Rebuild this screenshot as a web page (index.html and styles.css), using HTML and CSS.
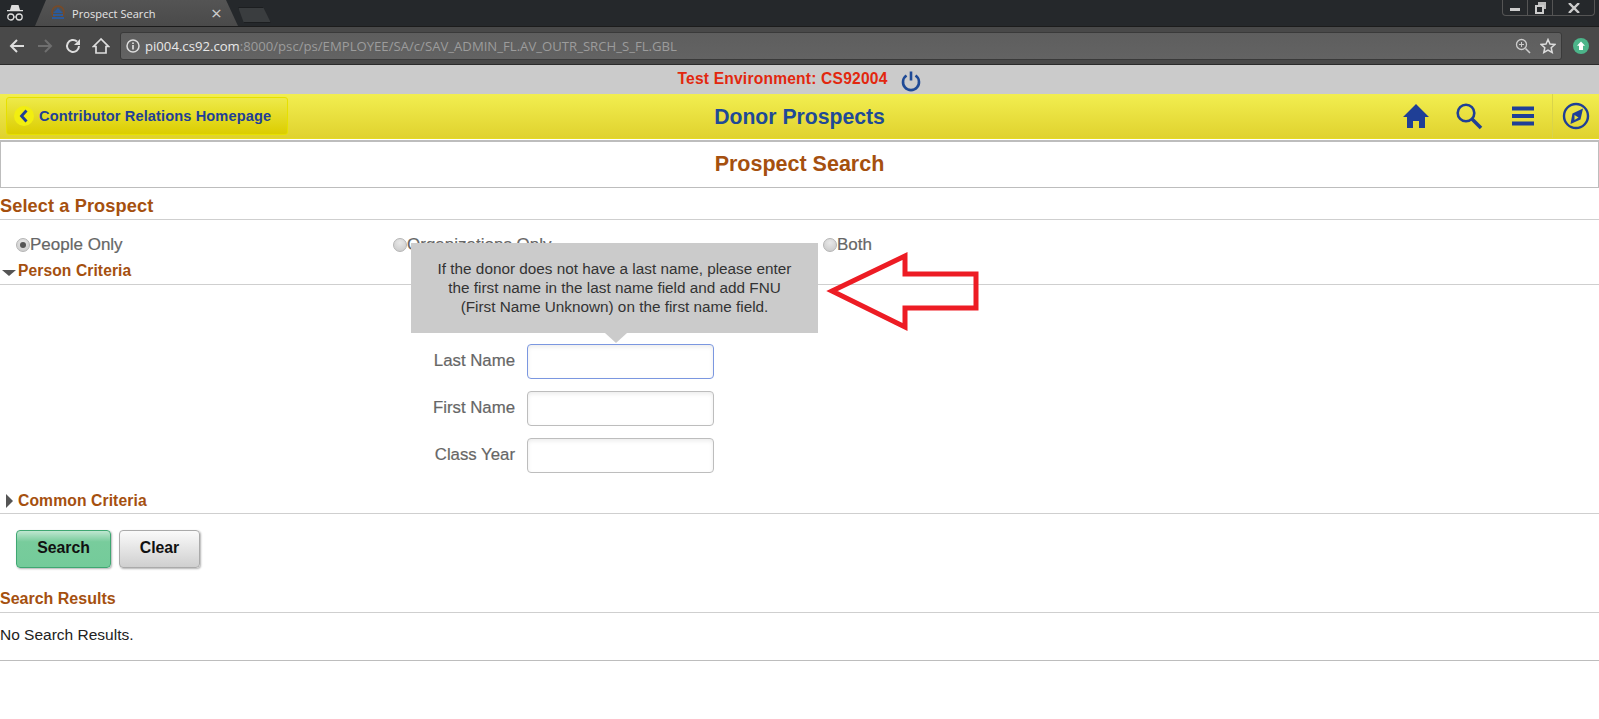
FILE: index.html
```html
<!DOCTYPE html>
<html lang="en">
<head>
<meta charset="utf-8">
<title>Prospect Search</title>
<link rel="stylesheet" href="styles.css">
</head>
<body>
<div class="tabstrip">
  <svg class="incognito" width="18" height="18" viewBox="0 0 18 18"><path d="M5.500 1h7l1.500 5h3v1.200H1V6h3z" fill="#ddd"/><circle cx="4.800" cy="13" r="3" fill="none" stroke="#ddd" stroke-width="1.300"/><circle cx="13.200" cy="13" r="3" fill="none" stroke="#ddd" stroke-width="1.300"/><path d="M7.800 13h2.400" stroke="#ddd"/></svg>
  <div class="tab">
    <svg class="favicon" width="16" height="16" viewBox="0 0 16 16"><circle cx="8" cy="7" r="6" fill="none" stroke="#7a4a25" stroke-width="1.500"/><path d="M8 3l5 5H3zM3 9h10v2H3zM2 12h12v2H2z" fill="#2c5a9a"/></svg>
    <span class="tabtitle">Prospect Search</span>
    <span class="tabclose">×</span>
  </div>
  <div class="newtab"></div>
  <div class="winctl">
    <span class="winbtn"><svg width="12" height="12" viewBox="0 0 12 12"><rect x="1" y="6" width="10" height="3" fill="#ccc"/></svg></span>
    <span class="winbtn"><svg width="13" height="13" viewBox="0 0 13 13"><path d="M4 1h8v7h-2V4H4z" fill="#bbb"/><rect x="2" y="5" width="7" height="7" fill="none" stroke="#ccc" stroke-width="2"/></svg></span>
    <span class="winbtn wide"><svg width="12" height="10" viewBox="0 0 12 10"><path d="M1 0l5 5 5-5M1 10l5-5 5 5" fill="none" stroke="#ccc" stroke-width="2.400"/></svg></span>
  </div>
</div>
<div class="toolbar">
  <svg class="tool first" width="18" height="18" viewBox="0 0 18 18"><path d="M16 9H3M9 3L3 9l6 6" fill="none" stroke="#ddd" stroke-width="2"/></svg>
  <svg class="tool" width="18" height="18" viewBox="0 0 18 18"><path d="M2 9h13M9 3l6 6-6 6" fill="none" stroke="#6f6f6f" stroke-width="2"/></svg>
  <svg class="tool" width="18" height="18" viewBox="0 0 18 18"><path d="M15 9a6 6 0 1 1-2-4.500" fill="none" stroke="#ddd" stroke-width="2"/><path d="M16 2v6h-6z" fill="#ddd"/></svg>
  <svg class="tool" width="18" height="18" viewBox="0 0 18 18"><path d="M9 2L1.500 9.500H4V16h10V9.500h2.500z" fill="none" stroke="#ddd" stroke-width="1.700"/></svg>
  <div class="omnibox">
    <svg class="info" width="14" height="14" viewBox="0 0 14 14"><circle cx="7" cy="7" r="6" fill="none" stroke="#ddd" stroke-width="1.500"/><path d="M7 6v4.500M7 3.500v1.500" stroke="#ddd" stroke-width="1.700"/></svg>
    <span class="url"><span class="host">pi004.cs92.com</span>:8000/psc/ps/EMPLOYEE/SA/c/SAV_ADMIN_FL.AV_OUTR_SRCH_S_FL.GBL</span>
    <svg class="zoomicon" width="16" height="16" viewBox="0 0 16 16"><circle cx="6.500" cy="6.500" r="5" fill="none" stroke="#ccc" stroke-width="1.300"/><path d="M4 6.500h5M6.500 4v5" stroke="#ccc"/><path d="M10.500 10.500L15 15" stroke="#ccc" stroke-width="1.600"/></svg>
    <svg class="star" width="16" height="16" viewBox="0 0 16 16"><path d="M8 1.500l2 4.500 4.800.5-3.600 3.200 1 4.800L8 12l-4.200 2.500 1-4.800L1.200 6.500 6 6z" fill="none" stroke="#ddd" stroke-width="1.500"/></svg>
  </div>
  <svg class="update" width="16" height="16" viewBox="0 0 16 16"><circle cx="8" cy="8" r="8" fill="#4cb58a"/><path d="M8 3.500l4 4.200H10V12H6V7.700H4z" fill="#fff"/></svg>
</div>
<div class="envbar">
  <span class="envtext">Test Environment: CS92004</span>
  <svg class="power" width="22" height="22" viewBox="0 0 22 22"><path d="M6.500 5.500a8 8 0 1 0 9 0" fill="none" stroke="#1f4a96" stroke-width="2.600"/><path d="M11 1.500v9" stroke="#1f4a96" stroke-width="2.600"/></svg>
</div>
<header class="banner">
  <div class="bannerside">
    <a class="backbtn"><span class="backcirc"><svg width="10" height="14" viewBox="0 0 10 14"><path d="M7.500 1.500L2.500 7l5 5.500" fill="none" stroke="#1f3f96" stroke-width="2.800"/></svg></span>Contributor Relations Homepage</a>
  </div>
  <h1 class="apptitle">Donor Prospects</h1>
  <div class="bannerside navicons">
    <svg width="28" height="26" viewBox="0 0 28 26"><path d="M14 1L1 14h4v11h6v-7h6v7h6V14h4z" fill="#1f3f96"/></svg>
    <svg width="28" height="28" viewBox="0 0 28 28"><circle cx="11" cy="11" r="8.300" fill="none" stroke="#1f3f96" stroke-width="2.600"/><path d="M17 17l9 9" stroke="#1f3f96" stroke-width="3.600"/></svg>
    <svg class="menuicon" width="24" height="22" viewBox="0 0 24 22"><path d="M1 1.500h22v4H1zM1 9h22v4H1zM1 16.500h22v4H1z" fill="#1f3f96"/></svg>
    <span class="navsep"><svg width="28" height="28" viewBox="0 0 28 28"><circle cx="14" cy="14" r="12" fill="none" stroke="#1f3f96" stroke-width="2.400"/><path d="M21 6.500l-2.500 11-10 4.500 2-10.500z" fill="#1f3f96"/><path d="M12.500 13v5l4-2.500z" fill="#e8e23c"/></svg></span>
  </div>
</header>
<main>
  <div class="pagetitle">Prospect Search</div>
  <h2 class="section big">Select a Prospect</h2>
  <div class="radios">
    <label class="radio col1"><span class="dot on"></span>People Only</label>
    <label class="radio col2"><span class="dot"></span>Organizations Only</label>
    <label class="radio col3"><span class="dot"></span>Both</label>
  </div>
  <h3 class="section person"><span class="tridown"></span>Person Criteria</h3>
  <div class="fields">
    <div class="field"><label>Last Name</label><input class="focus" type="text"></div>
    <div class="field"><label>First Name</label><input type="text"></div>
    <div class="field"><label>Class Year</label><input type="text"></div>
  </div>
  <h3 class="section common"><span class="triright"></span>Common Criteria</h3>
  <div class="buttons">
    <button class="btn search">Search</button>
    <button class="btn clear">Clear</button>
  </div>
  <h3 class="section results">Search Results</h3>
  <p class="noresults">No Search Results.</p>
</main>
<div class="tooltip">If the donor does not have a last name, please enter the first name in the last name field and add FNU (First Name Unknown) on the first name field.</div>
<svg class="redarrow" width="155" height="84" viewBox="0 0 155 84"><path d="M6 41L79 6V24H150V58H79V77Z" fill="none" stroke="#ed1c24" stroke-width="5"/></svg>
</body>
</html>
```
FILE: styles.css
```css
* { box-sizing: border-box; }
html, body { margin: 0; padding: 0; }
body { width: 1599px; height: 719px; overflow: hidden; background: #fff; font-family: "Liberation Sans", Arial, sans-serif; position: relative; }

.tabstrip { height: 27px; background: #25282b; display: flex; align-items: flex-end; border-bottom: 1px solid #1c1c1c; position: relative; }
.incognito { margin: 0 0 4px 6px; }
.tab { width: 203px; height: 26px; margin-left: 11px; background: linear-gradient(#545454, #4a4a4a); clip-path: polygon(11px 0, 191px 0, 203px 100%, 0 100%); display: flex; align-items: center; padding-left: 15px; color: #e6e6e6; font: 11px "Open Sans", sans-serif; letter-spacing: .05px; }
.tabtitle { margin-left: 6px; width: 139px; }
.tabclose { font-size: 19px; color: #ccc; line-height: 1; }
.newtab { width: 33px; height: 16px; margin: 0 0 3px 0; background: #3a3d3f; border: 1px solid #1c1e20; clip-path: polygon(0 0, 76% 0, 100% 100%, 18% 100%); }
.winctl { margin-left: auto; margin-right: 4px; align-self: flex-start; height: 16px; display: flex; border: 1px solid #555; border-top: 0; border-radius: 0 0 4px 4px; }
.winbtn { width: 25px; display: flex; align-items: center; justify-content: center; border-right: 1px solid #555; }
.winbtn.wide { width: 41px; border-right: 0; }

.toolbar { height: 38px; background: #494949; border-bottom: 1px solid #2b2b2b; display: flex; align-items: center; }
.tool { margin-right: 10px; }
.tool.first { margin-left: 8px; }
.omnibox { width: 1442px; height: 28px; background: linear-gradient(#5e5e5e, #636363); border: 1px solid #3a3a3a; border-radius: 3px; display: flex; align-items: center; padding: 0 5px; }
.info { flex: none; }
.url { margin-left: 5px; flex: 1; font: 13.150px "Open Sans", sans-serif; color: #9c9c9c; white-space: nowrap; }
.host { color: #e8e8e8; }
.zoomicon { margin-right: 9px; }
.update { margin-left: 11px; }

.envbar { height: 29px; background: #cbcbcb; display: flex; justify-content: center; align-items: center; gap: 12px; }
.envtext { padding-bottom: 2px; color: #e2270e; font-size: 15.600px; font-weight: 700; letter-spacing: .2px; }
.power { margin-top: 2px; }

.banner { height: 45px; background: linear-gradient(#f2ee50, #e0d22e); display: flex; align-items: center; border-bottom: 1px solid #e6da20; }
.bannerside { flex: 1 1 0; min-width: 0; }
.backbtn { margin-left: 6px; width: 282px; height: 38px; display: flex; align-items: center; background: linear-gradient(#eeea4a, #dccd00); border: 1px solid #e6e000; border-radius: 3px; color: #1f3f96; font-size: 14.600px; font-weight: 700; letter-spacing: .12px; }
.backcirc { width: 20px; height: 20px; margin: 0 5px 0 7px; border-radius: 50%; background: #f2ee10; display: flex; align-items: center; justify-content: center; }
.apptitle { margin: 0; padding-top: 2px; flex: none; text-align: center; color: #1f4a96; font-size: 21.200px; font-weight: 700; }
.navicons { display: flex; align-items: center; justify-content: flex-end; gap: 25px; }
.menuicon { margin-left: 3px; }
.navsep { height: 44px; width: 47px; border-left: 1px solid #d9d44a; display: flex; align-items: center; justify-content: center; margin-left: -8px; }

main { display: block; }
.pagetitle { height: 48px; margin-top: 1px; border: 1px solid #bdbdbd; border-top-width: 2px; display: flex; align-items: center; justify-content: center; color: #a5500f; font-size: 21.500px; font-weight: 700; }
.section { margin: 0; color: #a5500f; font-weight: 700; border-bottom: 1px solid #cfcfcf; }
.section.big { height: 32px; padding-top: 3px; font-size: 18.200px; line-height: 30px; letter-spacing: .1px; }
.radios { height: 37px; display: flex; align-items: center; padding-top: 12px; }
.radio { display: flex; align-items: center; color: #666; font-size: 17px; font-weight: 400; -webkit-text-stroke: .2px #666; }
.col1 { margin-left: 16px; width: 377px; }
.col2 { width: 430px; }
.dot { width: 14px; height: 14px; border-radius: 50%; border: 1px solid #b5b5b5; background: radial-gradient(circle at 50% 30%, #e8e8e8, #c8c8c8); display: inline-block; position: relative; }
.dot.on::after { content: ""; position: absolute; left: 3px; top: 3px; width: 6px; height: 6px; border-radius: 50%; background: #555; }
.section.person { height: 28px; font-size: 15.600px; display: flex; align-items: center; letter-spacing: .1px; }
.tridown { width: 0; height: 0; margin: 4px 2px 0 2px; border-style: solid; border-width: 6px 7px 0; border-color: #555 transparent transparent; }
.fields { height: 216px; padding-top: 59px; display: flex; flex-direction: column; gap: 12px; }
.field { display: flex; align-items: center; height: 35px; }
.field label { width: 515px; padding-bottom: 1px; text-align: right; color: #666; font-size: 16.800px; -webkit-text-stroke: .2px #666; }
.field input { margin-left: 12px; width: 187px; height: 35px; border: 1px solid #bdbdbd; border-radius: 4px; box-shadow: inset 0 2px 4px rgba(0,0,0,.08); background: #fff; outline: none; }
.field input.focus { border-color: #7b97e0; }
.section.common { height: 28px; margin-top: -15px; padding-top: 2px; font-size: 15.700px; display: flex; align-items: center; letter-spacing: .1px; }
.triright { width: 0; height: 0; margin: 0 5px 0 6px; border-style: solid; border-width: 7px 0 7px 7px; border-color: transparent transparent transparent #555; }
.buttons { height: 70px; padding: 16px 0 0 16px; display: flex; gap: 8px; align-items: flex-start; }
.btn { height: 38px; padding: 0 0 2px; border-radius: 4px; font: 700 15.800px "Liberation Sans", sans-serif; color: #111; box-shadow: 1px 1px 2px rgba(0,0,0,.3); }
.search { width: 95px; border: 1px solid #3fa772; background: linear-gradient(#bfe6d0, #78cc9c 30%, #74cb9a); }
.clear { width: 81px; border: 1px solid #aaa; background: linear-gradient(#fafafa, #cfcfcf); }
.section.results { height: 29px; font-size: 16px; line-height: 29px; }
.noresults { margin: 0; height: 48px; padding-top: 13px; border-bottom: 1px solid #bdbdbd; font-size: 15.500px; color: #222; }

.tooltip { position: absolute; left: 411px; top: 243px; width: 407px; height: 90px; padding: 16px 20px 0; background: #cbcbcb; color: #333; font-size: 15.300px; line-height: 19px; text-align: center; }
.tooltip::after { content: ""; position: absolute; left: 194px; top: 90px; border-style: solid; border-width: 10px 11px 0; border-color: #cbcbcb transparent transparent; }
.redarrow { position: absolute; left: 826px; top: 250px; }
```
